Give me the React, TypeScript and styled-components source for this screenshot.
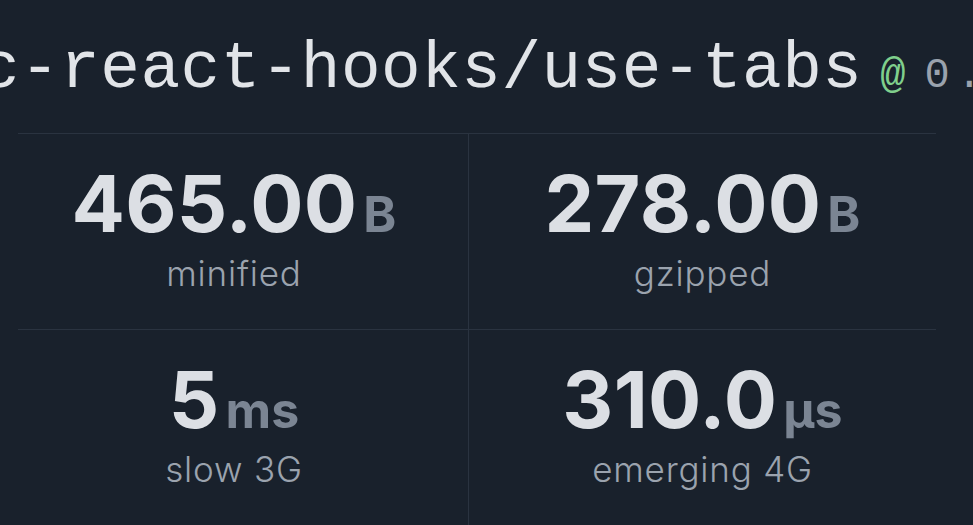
import React from 'react';
import styled, { createGlobalStyle } from 'styled-components';

const GlobalStyle = createGlobalStyle`
    html, body {
        margin: 0;
        padding: 0;
        background-color: #19212c;
    }
    body {
        width: 973px;
        height: 525px;
        overflow: hidden;
    }
`;

const Page = styled.div`
    width: 973px;
    height: 525px;
    background-color: #19212c;
    overflow: hidden;
    display: flex;
    flex-direction: column;
`;

const Title = styled.h1`
    margin: 0;
    height: 136px;
    box-sizing: border-box;
    padding-top: 30px;
    white-space: nowrap;
    overflow: hidden;
    text-indent: -20px;
    font-family: 'Liberation Mono', 'DejaVu Sans Mono', monospace;
    font-weight: 400;
    font-size: 66px;
    line-height: 80px;
    color: #e1e4e8;
    letter-spacing: 0.5px;
`;

const Version = styled.span`
    font-size: 42px;
    color: #9aa2ad;
    letter-spacing: 7px;
    margin-left: 18px;
`;

const At = styled.span`
    color: #7fcf8c;
    margin-right: 12px;
`;

const Stats = styled.div`
    width: 936px;
    display: flex;
    flex-direction: column;
    flex: 1;
`;

const Row = styled.div`
    display: grid;
    grid-template-columns: 450px 468px;
    height: 195px;
    border-top: 1px solid #2a3340;
    margin-left: 18px;
    & > :first-child {
        margin-left: -18px;
    }
`;

const Cell = styled.div<{ $divider?: boolean }>`
    display: flex;
    flex-direction: column;
    align-items: center;
    padding-top: 25px;
    border-left: ${(p) => (p.$divider ? '1px solid #2a3340' : 'none')};
    box-sizing: border-box;
`;

const Figure = styled.div`
    display: flex;
    align-items: baseline;
    font-family: Inter, 'Noto Sans', sans-serif;
    font-weight: 700;
    font-size: 79px;
    line-height: 88px;
    color: #dcdfe4;
    letter-spacing: 0.3px;
`;

const Unit = styled.span`
    font-size: 50px;
    color: #7b8593;
    margin-left: 6px;
    letter-spacing: 0;
`;

const Label = styled.div`
    font-family: Inter, 'Noto Sans', sans-serif;
    font-weight: 300;
    font-size: 35px;
    line-height: 40px;
    letter-spacing: 0.8px;
    color: #9ba3ae;
    margin-top: -5px;
`;

type Stat = { value: string; unit: string; label: string };

const rows: Stat[][] = [
    [
        { value: '465.00', unit: 'B', label: 'minified' },
        { value: '278.00', unit: 'B', label: 'gzipped' },
    ],
    [
        { value: '5', unit: 'ms', label: 'slow 3G' },
        { value: '310.0', unit: 'µs', label: 'emerging 4G' },
    ],
];

const App: React.FC = () => {
    return (
        <Page>
            <GlobalStyle />
            <Title>
                c-react-hooks/use-tabs
                <Version>
                    <At>@</At>0.1.0
                </Version>
            </Title>
            <Stats>
                {rows.map((row, i) => (
                    <Row key={i}>
                        {row.map((s, j) => (
                            <Cell key={s.label} $divider={j === 1}>
                                <Figure>
                                    {s.value}
                                    <Unit>{s.unit}</Unit>
                                </Figure>
                                <Label>{s.label}</Label>
                            </Cell>
                        ))}
                    </Row>
                ))}
            </Stats>
        </Page>
    );
};

export default App;
